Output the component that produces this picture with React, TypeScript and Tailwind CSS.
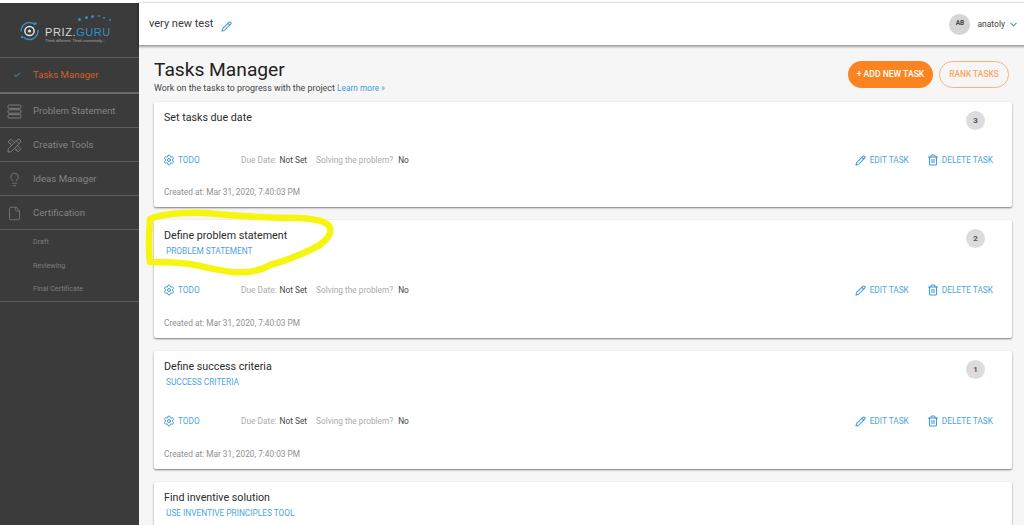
import { Check, ChevronDown, File, Lightbulb, Pencil, Settings, Trash2 } from "lucide-react"
import { TbTools } from "react-icons/tb"

interface Task {
  title: string
  rank?: number
  link?: string
  short?: boolean
}

const tasks: Task[] = [
  { title: "Set tasks due date", rank: 3, short: true },
  { title: "Define problem statement", rank: 2, link: "PROBLEM STATEMENT" },
  { title: "Define success criteria", rank: 1, link: "SUCCESS CRITERIA" },
  { title: "Find inventive solution", link: "USE INVENTIVE PRINCIPLES TOOL" },
]

function StackIcon() {
  return (
    <svg width="15" height="15" viewBox="0 0 15 15" fill="none" stroke="#7d7d7d" strokeWidth="1">
      <rect x="1" y="1" width="13" height="3.4" rx="1.2" />
      <rect x="1" y="5.8" width="13" height="3.4" rx="1.2" />
      <rect x="1" y="10.6" width="13" height="3.4" rx="1.2" />
    </svg>
  )
}

function Logo() {
  return (
    <div className="flex items-center h-[54px] pl-[17px] bg-[#3b3b3b]">
      <svg width="24" height="24" viewBox="0 0 24 24" fill="none" className="mt-[1px]">
        <circle cx="12.5" cy="12" r="8.5" stroke="#2f8fca" strokeWidth="1.4" strokeDasharray="20 6" />
        <circle cx="12.5" cy="12" r="4.6" stroke="#e6e6e6" strokeWidth="1.5" />
        <circle cx="12.5" cy="12" r="1.6" fill="#e6e6e6" />
        <circle cx="18.5" cy="4.5" r="1.3" fill="#2f8fca" />
        <circle cx="5" cy="18" r="1.2" fill="#2f8fca" />
      </svg>
      <div className="ml-[4px] mt-[10px] relative font-['Liberation_Sans',sans-serif] leading-none">
        <div className="absolute left-[33px] top-[-12px] flex gap-[3.5px] items-start">
          <span className="w-[3px] h-[3px] rounded-full bg-[#2f8fca] mt-[3px]" />
          <span className="w-[3px] h-[3px] rounded-full bg-[#2f8fca] mt-[1px]" />
          <span className="w-[3px] h-[3px] rounded-full bg-[#2f8fca]" />
          <span className="w-[2px] h-[2px] rounded-full bg-[#2f8fca]" />
          <span className="w-[2px] h-[2px] rounded-full bg-[#2f8fca] mt-[2px]" />
          <span className="w-[2px] h-[2px] rounded-full bg-[#2f8fca] mt-[4px]" />
        </div>
        <div className="text-[11px] tracking-[0.6px] text-[#d8d8d8]">
          PRIZ.<span className="text-[#2f8fca]">GURU</span>
        </div>
        <div className="text-[4px] text-[#a8a8a8] mt-[1px] whitespace-nowrap">Think different. Think inventively...</div>
      </div>
    </div>
  )
}

function Sidebar() {
  const rowClass = "h-[34px] pt-[1px] flex items-center border-b border-[#5c5c5c] text-[9.6px] text-[#848484]"
  return (
    <aside className="w-[139px] shrink-0 bg-[#3b3b3b] flex flex-col font-['Roboto',sans-serif]">
      <Logo />
      <div className="h-[37px] flex items-center border-t border-b-[2px] border-t-[#5c5c5c] border-b-[#6a6a6a] text-[9.6px] text-[#d0602b]">
        <div className="w-[33px] flex justify-center">
          <Check size={8} strokeWidth={3} color="#3d9bd6" />
        </div>
        <span>Tasks Manager</span>
      </div>
      <div className={rowClass}>
        <div className="w-[33px] pl-[7px]"><StackIcon /></div>
        <span>Problem Statement</span>
      </div>
      <div className={rowClass}>
        <div className="w-[33px] pl-[6px]"><TbTools size={17} color="#7d7d7d" strokeWidth={1.4} /></div>
        <span>Creative Tools</span>
      </div>
      <div className={rowClass}>
        <div className="w-[33px] pl-[7px]"><Lightbulb size={15} color="#7d7d7d" strokeWidth={1.3} /></div>
        <span>Ideas Manager</span>
      </div>
      <div className={rowClass}>
        <div className="w-[33px] pl-[7px]"><File size={15} color="#7d7d7d" strokeWidth={1.3} /></div>
        <span>Certification</span>
      </div>
      <div className="flex flex-col border-b border-[#5c5c5c] h-[72px] pt-[1px] pl-[33px] text-[7.2px] text-[#7d7d7d]">
        <div className="h-[24px] flex items-center">Draft</div>
        <div className="h-[24px] flex items-center">Reviewing</div>
        <div className="h-[23px] flex items-center">Final Certificate</div>
      </div>
    </aside>
  )
}

function TopBar() {
  return (
    <header className="h-[42px] shrink-0 bg-white flex items-center justify-between pl-[10px] pr-[6px] shadow-[0_1px_2px_1px_rgba(0,0,0,0.35)] relative z-10">
      <div className="flex items-center gap-[8px] text-[11px] text-[#3a3a3a]">
        <span>very new test</span>
        <Pencil size={11} color="#3d9bd6" strokeWidth={2.2} className="mt-[5px]" />
      </div>
      <div className="flex items-center">
        <div className="w-[21px] h-[21px] rounded-full bg-[#d5d5d5] flex items-center justify-center text-[6.5px] font-bold text-[#444]">AB</div>
        <span className="ml-[7px] text-[8.5px] text-[#444]">anatoly</span>
        <ChevronDown size={11} color="#3d9bd6" strokeWidth={2.4} className="ml-[3px] mr-[-1px]" />
      </div>
    </header>
  )
}

function TaskCard({ task }: { task: Task }) {
  return (
    <div className={`bg-white rounded-[2px] shrink-0 px-[10px] shadow-[0_1px_2px_rgba(0,0,0,0.5)] flex flex-col ${task.short ? "h-[105px]" : "h-[118px]"}`}>
      <div className="flex justify-between pt-[8px] h-[33px]">
        <div>
          <div className="text-[10.7px] leading-[14px] mt-[1px] text-[#2b2b2b]">{task.title}</div>
          {task.link && <div className="text-[8.3px] leading-[10px] mt-[3px] ml-[2px] text-[#4ba6dc]">{task.link}</div>}
        </div>
        {task.rank && (
          <div className="w-[19px] h-[19px] mr-[17px] mt-[1px] rounded-full bg-[#dcdcdc] flex items-center justify-center text-[8px] font-bold text-[#555]">
            {task.rank}
          </div>
        )}
      </div>
      <div className={`flex items-center justify-between text-[8.3px] ${task.short ? "mt-[18px]" : "mt-[30px]"}`}>
        <div className="flex items-center">
          <Settings size={12} color="#3d9bd6" className="ml-[-1px]" />
          <span className="ml-[3px] w-[63px] text-[#4ba6dc]">TODO</span>
          <span className="text-[#ababab]">Due Date:</span>
          <span className="ml-[3px] text-[#444]">Not Set</span>
          <span className="ml-[9px] text-[#ababab]">Solving the problem?</span>
          <span className="ml-[5px] text-[#444]">No</span>
        </div>
        <div className="flex items-center mt-[1px] mr-[9px] text-[#4ba6dc]">
          <Pencil size={11} color="#3d9bd6" strokeWidth={2.2} />
          <span className="ml-[4px]">EDIT TASK</span>
          <Trash2 size={12} color="#3d9bd6" strokeWidth={2.2} className="ml-[18px]" />
          <span className="ml-[3px]">DELETE TASK</span>
        </div>
      </div>
      <div className={`text-[8.3px] leading-[10px] text-[#8f8f8f] ${task.short ? "mt-[21px]" : "mt-[22px]"}`}>
        Created at: Mar 31, 2020, 7:40:03 PM
      </div>
    </div>
  )
}

export default function App() {
  return (
    <div className="relative h-[525px] w-[1024px] overflow-hidden bg-white pt-[3px] flex font-['Roboto',sans-serif]">
      <Sidebar />
      <main className="flex-1 flex flex-col min-w-0 bg-[#f6f6f6]">
        <TopBar />
        <div className="flex items-start justify-between pl-[15px] pr-[15px] pt-[13px] h-[57px] shrink-0">
          <div>
            <h1 className="text-[19.2px] leading-[24px] text-[#222]">Tasks Manager</h1>
            <p className="text-[8.9px] leading-[10px] mt-[1px] text-[#444]">
              Work on the tasks to progress with the project <span className="text-[#3d9bd6] text-[8.3px]">Learn more »</span>
            </p>
          </div>
          <div className="flex gap-[6px] mt-[3px] font-medium">
            <button className="w-[85px] h-[27px] rounded-full bg-[#fb8420] text-white text-[8.6px]">+ ADD NEW TASK</button>
            <button className="w-[70px] h-[27px] rounded-full border border-[#fbb27a] text-[#fba566] text-[8.4px]">RANK TASKS</button>
          </div>
        </div>
        <div className="flex flex-col gap-[13px] pl-[15px] pr-[12px]">
          {tasks.map((task) => (
            <TaskCard key={task.title} task={task} />
          ))}
        </div>
      </main>
      {/* yellow marker scribble drawn over the page */}
      <svg className="absolute left-0 top-0 pointer-events-none" width="1024" height="525" fill="none">
        <path
          d="M150 262 C148 248 149 232 150 219 C160 214 185 212 205 213 C235 216 270 218 300 218 C315 219 328 221 330 228 C332 236 322 245 312 249 C298 256 285 261 270 265 C260 271 245 273 232 272 C215 270 205 267 190 264 C175 262 160 262 150 262"
          stroke="#f5f510"
          strokeWidth="6.5"
          strokeLinejoin="round"
          strokeLinecap="round"
        />
      </svg>
    </div>
  )
}
